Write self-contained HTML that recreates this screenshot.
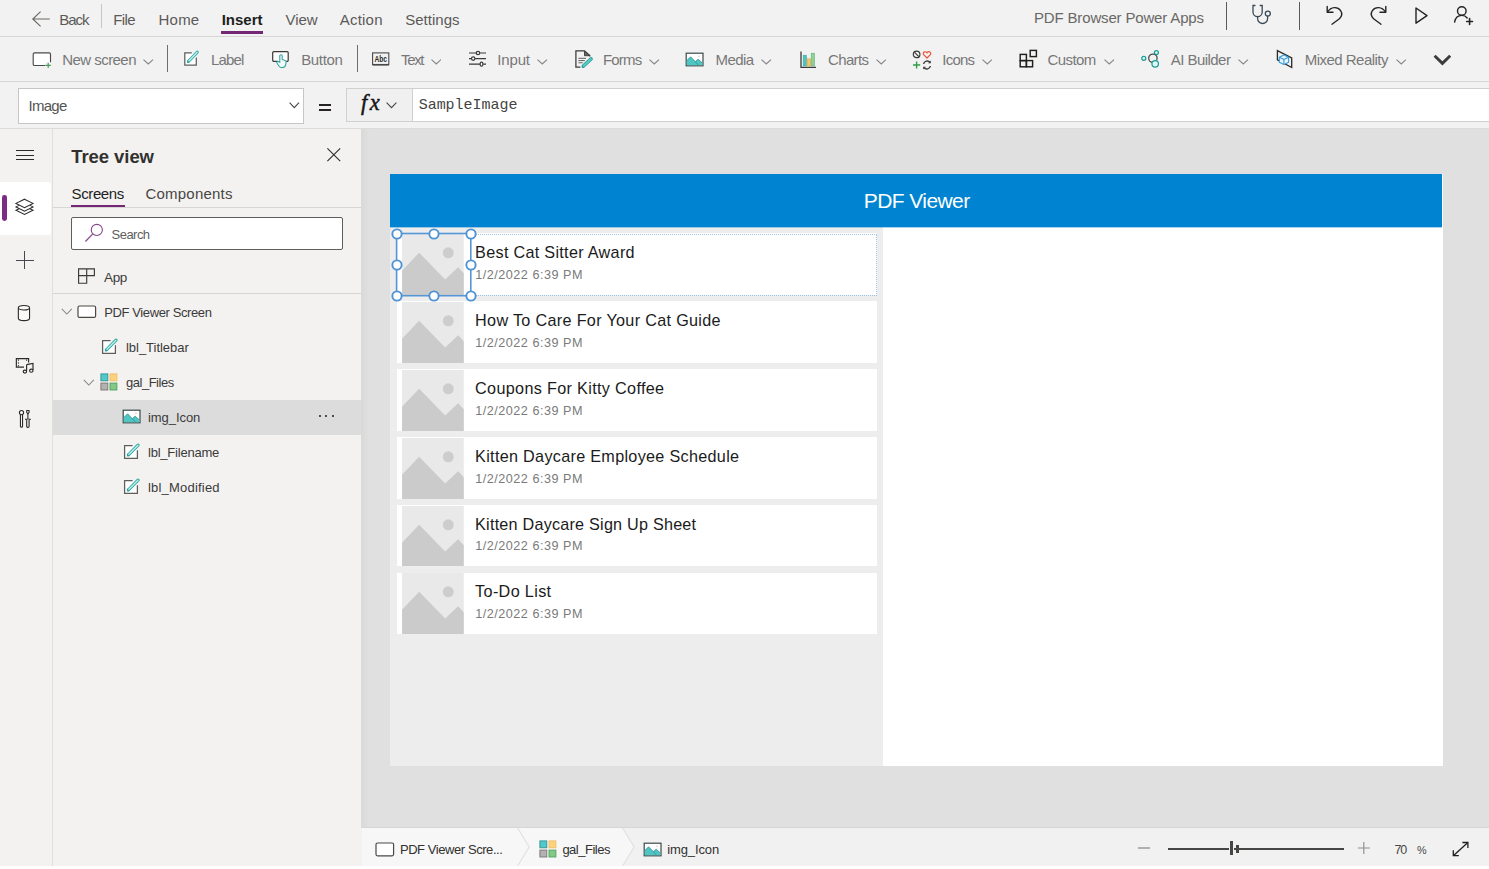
<!DOCTYPE html>
<html lang="en"><head><meta charset="utf-8"><title>PDF Browser Power Apps</title>
<style>
html,body{margin:0;padding:0;background:#fff;}
body{width:1489px;height:869px;overflow:hidden;position:relative;font-family:"Liberation Sans",sans-serif;}
.a{position:absolute;display:block;}
.t{position:absolute;display:block;white-space:pre;line-height:20px;height:20px;}
.s{font-family:"Liberation Sans",sans-serif;}
.m{font-family:"Liberation Mono",monospace;}
.r{font-family:"Liberation Serif",serif;}
</style></head>
<body>
<div class="a" style="left:0px;top:0px;width:1489px;height:866px;background:#f3f2f1;"></div>
<div class="a" style="left:0px;top:0px;width:1489px;height:128px;background:#f2f2f2;"></div>
<div class="a" style="left:0px;top:36px;width:1489px;height:1px;background:#d8d6d4;"></div>
<div class="a" style="left:0px;top:81px;width:1489px;height:1px;background:#d8d6d4;"></div>
<div class="a" style="left:0px;top:128px;width:1489px;height:1px;background:#dddbd9;"></div>
<div class="a" style="left:362px;top:129px;width:1127px;height:699px;background:#e0e0e0;"></div>
<div class="a" style="left:361px;top:129px;width:8px;height:699px;background:linear-gradient(to right,#d9d9d9,#e0e0e0);"></div>
<div class="a" style="left:52px;top:129px;width:1px;height:737px;background:#e1dfdd;"></div>
<div class="a" style="left:362px;top:827px;width:1127px;height:1px;background:#d6d6d6;"></div>
<div class="a" style="left:362px;top:828px;width:1127px;height:38px;background:#f1f1f1;"></div>
<!-- topbar -->
<svg class="a" style="left:30px;top:9px;" width="22" height="20" viewBox="0 0 22 20"><path d="M10.6 2.6 L2.8 10 L10.6 17.4 M2.8 10 H19.8" fill="none" stroke="#6a6866" stroke-width="1.15"/></svg>
<span class="t s " style="left:59.2px;top:9.80px;font-size:15px;color:#5c5a58;letter-spacing:-1.020px;">Back</span>
<div class="a" style="left:101px;top:4px;width:1px;height:24px;background:#c8c6c4;"></div>
<span class="t s " style="left:113.2px;top:9.80px;font-size:15px;color:#5c5a58;letter-spacing:-0.557px;">File</span>
<span class="t s " style="left:158.5px;top:9.80px;font-size:15px;color:#5c5a58;letter-spacing:0.228px;">Home</span>
<span class="t s " style="left:221.7px;top:9.80px;font-size:15px;color:#201f1e;letter-spacing:-0.012px;font-weight:700;">Insert</span>
<div class="a" style="left:221px;top:31px;width:42px;height:3px;background:#742774;"></div>
<span class="t s " style="left:285.5px;top:9.80px;font-size:15px;color:#5c5a58;letter-spacing:-0.083px;">View</span>
<span class="t s " style="left:339.7px;top:9.80px;font-size:15px;color:#5c5a58;letter-spacing:0.219px;">Action</span>
<span class="t s " style="left:405.2px;top:9.80px;font-size:15px;color:#5c5a58;letter-spacing:0.014px;">Settings</span>
<span class="t s " style="left:1034px;top:8.30px;font-size:15px;color:#6a6866;letter-spacing:-0.162px;">PDF Browser Power Apps</span>
<div class="a" style="left:1226px;top:2px;width:1.2px;height:28px;background:#5a5a5a;"></div>
<div class="a" style="left:1299px;top:2px;width:1.2px;height:28px;background:#5a5a5a;"></div>
<svg class="a" style="left:1250px;top:3px;" width="24" height="24" viewBox="0 0 24 24"><g fill="none" stroke="#3b4a57" stroke-width="1.3" stroke-linecap="round"><path d="M5 2.5 H3 V9 a4.6 4.6 0 0 0 9.2 0 V2.5 H10.2"/><path d="M7.6 13.6 V15.5 a5 5 0 0 0 10 0 V13.2"/><circle cx="17.8" cy="10.6" r="2.5"/></g></svg>
<svg class="a" style="left:1324px;top:3px;" width="22" height="24" viewBox="0 0 22 24"><g fill="none" stroke="#252423" stroke-width="1.4" stroke-linecap="round" stroke-linejoin="round"><path d="M3.2 3.4 V9.2 H9"/><path d="M3.6 8.8 C7 3.8 13.5 3.2 16.6 7.6 C18.6 10.6 17.6 13.6 15.4 15.8 L8 21.2"/></g></svg>
<svg class="a" style="left:1367px;top:3px;" width="22" height="24" viewBox="0 0 22 24"><g transform="translate(22 0) scale(-1 1)" fill="none" stroke="#252423" stroke-width="1.4" stroke-linecap="round" stroke-linejoin="round"><path d="M3.2 3.4 V9.2 H9"/><path d="M3.6 8.8 C7 3.8 13.5 3.2 16.6 7.6 C18.6 10.6 17.6 13.6 15.4 15.8 L8 21.2"/></g></svg>
<svg class="a" style="left:1413px;top:5px;" width="18" height="22" viewBox="0 0 18 22"><path d="M3 3 L14 10.6 L3 18.2 Z" fill="none" stroke="#252423" stroke-width="1.4" stroke-linejoin="round"/></svg>
<svg class="a" style="left:1452px;top:4px;" width="24" height="24" viewBox="0 0 24 24"><g fill="none" stroke="#252423" stroke-width="1.4" stroke-linecap="round"><circle cx="9.8" cy="7" r="4.3"/><path d="M2.6 18 C3.4 13.6 6.4 11.4 9.8 11.4 C12 11.4 14 12.4 15.2 14"/><path d="M17.6 14.6 V20.4 M14.7 17.5 H20.5" stroke-width="1.6"/></g></svg>
<!-- ribbon -->
<svg class="a" style="left:32px;top:51px;" width="22" height="18" viewBox="0 0 22 18"><rect x="1.2" y="1.9" width="17.3" height="12.6" rx="1.3" fill="#fff" stroke="#4a4a4a" stroke-width="1.15"/><rect x="13.2" y="11.2" width="7" height="7" fill="#f2f2f2"/><path d="M16.2 11.7 V17 M13.6 14.35 H18.8" stroke="#3f9b4f" stroke-width="1.05" fill="none"/></svg>
<span class="t s " style="left:62.3px;top:50.30px;font-size:15px;color:#787878;letter-spacing:-0.556px;">New screen</span>
<svg class="a" style="left:143.2px;top:58.7px;" width="10.5" height="6.2" viewBox="0 0 10.5 6.2"><path d="M0.5 0.6 L5.25 5.0 L10.0 0.6" fill="none" stroke="#858585" stroke-width="1.1"/></svg>
<div class="a" style="left:167px;top:45px;width:1px;height:27px;background:#6e6e6e;"></div>
<svg class="a" style="left:183px;top:49px;" width="18" height="19" viewBox="0 0 18 19"><path d="M8.8 3.9 H1.8 V16.2 H13.3 V8.6" fill="#fff" stroke="#5f5e5c" stroke-width="1.25"/><path d="M3.9 13.9 L4.8 11 L6.9 13.1 Z" fill="#2a9d96"/><path d="M5.6 12.3 L14.2 3.2" stroke="#2ba39c" stroke-width="3.1" stroke-linecap="round" fill="none"/><path d="M6.1 11.8 L14.1 3.3" stroke="#b8f1ed" stroke-width="1.5" stroke-linecap="round" fill="none"/></svg>
<span class="t s " style="left:211px;top:50.30px;font-size:15px;color:#787878;letter-spacing:-0.826px;">Label</span>
<svg class="a" style="left:271px;top:50px;" width="20" height="20" viewBox="0 0 20 20"><rect x="1.8" y="1.8" width="15.4" height="9.4" rx="1.2" fill="#fdfdfd"/><path d="M6.6 11.4 H2.8 a1.1 1.1 0 0 1 -1.1 -1.1 V2.8 a1.1 1.1 0 0 1 1.1 -1.1 H16.1 a1.1 1.1 0 0 1 1.1 1.1 V10.3 a1.1 1.1 0 0 1 -1.1 1.1 H15.2" fill="none" stroke="#3b3a39" stroke-width="1.2"/><path d="M8.8 12.4 V6 a1.2 1.2 0 0 1 2.4 0 V9.6 L13.6 10.2 a1.9 1.9 0 0 1 1.5 2.1 L14.7 14.6 a3.6 3.6 0 0 1 -3.5 3 H10.9 a3.8 3.8 0 0 1 -3.2 -1.8 L6 13 a1 1 0 0 1 1.6 -1.2 Z" fill="#f2fbfa" stroke="#2fa39c" stroke-width="1.05" stroke-linejoin="round"/></svg>
<span class="t s " style="left:301.2px;top:50.30px;font-size:15px;color:#787878;letter-spacing:-0.355px;">Button</span>
<div class="a" style="left:357px;top:45px;width:1px;height:27px;background:#6e6e6e;"></div>
<svg class="a" style="left:371px;top:52px;" width="19" height="14" viewBox="0 0 19 14"><rect x="1.6" y="0.9" width="16.2" height="11.6" fill="none" stroke="#4a4846" stroke-width="1.1"/><path d="M1.6 12.9 H17.8" stroke="#4a4846" stroke-width="1.4"/><text x="9.7" y="9.9" font-family="Liberation Sans, sans-serif" font-size="8.4" font-weight="700" text-anchor="middle" textLength="12.6" lengthAdjust="spacingAndGlyphs" fill="#2b2a29">Abc</text></svg>
<span class="t s " style="left:401px;top:50.30px;font-size:15px;color:#787878;letter-spacing:-1.339px;">Text</span>
<svg class="a" style="left:430.8px;top:58.7px;" width="10.5" height="6.2" viewBox="0 0 10.5 6.2"><path d="M0.5 0.6 L5.25 5.0 L10.0 0.6" fill="none" stroke="#858585" stroke-width="1.1"/></svg>
<svg class="a" style="left:468px;top:49px;" width="19" height="19" viewBox="0 0 19 19"><g fill="none" stroke="#3b3a39" stroke-width="1.2"><path d="M1 4 H8.4 M11.6 4 H18"/><circle cx="10" cy="4" r="1.7" fill="#fff"/><path d="M1 9.6 H3.6 M6.8 9.6 H18"/><circle cx="5.2" cy="9.6" r="1.7" fill="#fff"/><path d="M1 15.2 H12 M15.2 15.2 H18"/><rect x="12.2" y="13.2" width="2.6" height="4" rx="1.2" fill="#fff"/></g></svg>
<span class="t s " style="left:497.3px;top:50.30px;font-size:15px;color:#787878;letter-spacing:-0.169px;">Input</span>
<svg class="a" style="left:537.2px;top:58.7px;" width="10.5" height="6.2" viewBox="0 0 10.5 6.2"><path d="M0.5 0.6 L5.25 5.0 L10.0 0.6" fill="none" stroke="#858585" stroke-width="1.1"/></svg>
<svg class="a" style="left:573px;top:49px;" width="22" height="21" viewBox="0 0 22 21"><path d="M7.4 18.1 H2.9 V1.9 H11.5 L16.8 6.6 V7.4" fill="none" stroke="#3b3a39" stroke-width="1.25" stroke-linejoin="miter"/><path d="M11.5 2.3 V6.7 H16.5 Z" fill="#6a6866" stroke="#3b3a39" stroke-width="0.9" stroke-linejoin="round"/><path d="M5.4 9.3 H13 M5.4 11.6 H11.8" stroke="#555" stroke-width="0.95" fill="none"/><path d="M5.4 13.7 H9.8" stroke="#8a8886" stroke-width="1.3" fill="none"/><path d="M8.6 19 L9.6 15.9 L11.7 18 Z" fill="#1f9a94"/><path d="M10.4 17 L18 10" stroke="#1f9a94" stroke-width="3.7" stroke-linecap="round" fill="none"/><path d="M10.7 16.7 L17.8 10.2" stroke="#5acdc8" stroke-width="2.2" stroke-linecap="round" fill="none"/></svg>
<span class="t s " style="left:603px;top:50.30px;font-size:15px;color:#787878;letter-spacing:-0.825px;">Forms</span>
<svg class="a" style="left:649px;top:58.7px;" width="10.5" height="6.2" viewBox="0 0 10.5 6.2"><path d="M0.5 0.6 L5.25 5.0 L10.0 0.6" fill="none" stroke="#858585" stroke-width="1.1"/></svg>
<svg class="a" style="left:685.4px;top:51.8px;" width="19" height="15" viewBox="0 0 19 15"><rect x="1.2" y="1.2" width="16.8" height="12.6" fill="#fff" stroke="#3b4a4a" stroke-width="1.2"/><path d="M1.8 13.2 V8.6 L5.6 4.8 L10.2 9.6 L13.2 7.2 L17.4 11 V13.2 Z" fill="#4fc6c3"/><path d="M1.8 8.6 L5.6 4.8 L13.6 13.2 M10.6 9.4 L13.2 7.2 L17.4 11" fill="none" stroke="#2d8f8c" stroke-width="0.8"/><circle cx="14" cy="4.4" r="0.8" fill="#f4c7c0"/></svg>
<span class="t s " style="left:715.5px;top:50.30px;font-size:15px;color:#787878;letter-spacing:-0.540px;">Media</span>
<svg class="a" style="left:761px;top:58.7px;" width="10.5" height="6.2" viewBox="0 0 10.5 6.2"><path d="M0.5 0.6 L5.25 5.0 L10.0 0.6" fill="none" stroke="#858585" stroke-width="1.1"/></svg>
<svg class="a" style="left:798.6px;top:49.8px;" width="19" height="20" viewBox="0 0 19 20"><path d="M2 1.6 V17.4 H17" fill="none" stroke="#3b3a39" stroke-width="1.3"/><rect x="4.2" y="5.2" width="3.2" height="10.8" fill="#4fc3be" stroke="#3aa9a4" stroke-width="0.6"/><rect x="8.2" y="8.8" width="3.2" height="7.2" fill="#f6c56a" stroke="#e0a53c" stroke-width="0.6"/><rect x="12.2" y="3.2" width="3.2" height="12.8" fill="#8fd19a" stroke="#5db36c" stroke-width="0.6"/></svg>
<span class="t s " style="left:828px;top:50.30px;font-size:15px;color:#787878;letter-spacing:-0.637px;">Charts</span>
<svg class="a" style="left:875.8px;top:58.7px;" width="10.5" height="6.2" viewBox="0 0 10.5 6.2"><path d="M0.5 0.6 L5.25 5.0 L10.0 0.6" fill="none" stroke="#858585" stroke-width="1.1"/></svg>
<svg class="a" style="left:911px;top:48.8px;" width="22" height="22" viewBox="0 0 22 22"><circle cx="5.6" cy="5.4" r="3.3" fill="none" stroke="#3b3a39" stroke-width="1.2"/><path d="M3.4 3.2 L7.8 7.6" stroke="#3b3a39" stroke-width="1.2"/><path d="M16 9 L12.4 5.4 a1.9 1.9 0 0 1 3.6 -1.4 a1.9 1.9 0 0 1 3.6 1.4 Z" fill="none" stroke="#e8553d" stroke-width="1.2" stroke-linejoin="round"/><path d="M5.6 12.4 V19.6 M2 16 H9.2" stroke="#2e9e49" stroke-width="1.4"/><path d="M12.6 15 a3.6 3.6 0 0 1 6.4 -1.6 M19.4 17 a3.6 3.6 0 0 1 -6.4 1.6" fill="none" stroke="#3b3a39" stroke-width="1.4"/><path d="M19.8 11.4 V14.2 H17 Z M12.2 20.6 V17.8 H15 Z" fill="#3b3a39"/></svg>
<span class="t s " style="left:942.3px;top:50.30px;font-size:15px;color:#787878;letter-spacing:-0.790px;">Icons</span>
<svg class="a" style="left:981.7px;top:58.7px;" width="10.5" height="6.2" viewBox="0 0 10.5 6.2"><path d="M0.5 0.6 L5.25 5.0 L10.0 0.6" fill="none" stroke="#858585" stroke-width="1.1"/></svg>
<svg class="a" style="left:1019.3px;top:48.9px;" width="19" height="19" viewBox="0 0 19 19"><g fill="none" stroke="#201f1e" stroke-width="1.45"><rect x="1.2" y="5.4" width="6.2" height="6.2"/><rect x="1.2" y="11.6" width="6.2" height="6.2"/><rect x="7.4" y="11.6" width="6.2" height="6.2"/><rect x="11.2" y="1.4" width="6.2" height="6.2"/></g></svg>
<span class="t s " style="left:1047.6px;top:50.30px;font-size:15px;color:#787878;letter-spacing:-0.617px;">Custom</span>
<svg class="a" style="left:1104px;top:58.7px;" width="10.5" height="6.2" viewBox="0 0 10.5 6.2"><path d="M0.5 0.6 L5.25 5.0 L10.0 0.6" fill="none" stroke="#858585" stroke-width="1.1"/></svg>
<svg class="a" style="left:1140px;top:48px;" width="22" height="22" viewBox="0 0 22 22"><circle cx="12.9" cy="10.3" r="4.2" fill="none" stroke="#4a4a4a" stroke-width="1.3"/><g fill="#dff7f5" stroke="#1f9c96" stroke-width="1.25"><circle cx="3.8" cy="10.3" r="2"/><circle cx="16.4" cy="4.5" r="2"/><circle cx="15.2" cy="15.8" r="3.25"/></g></svg>
<span class="t s " style="left:1170.8px;top:50.30px;font-size:15px;color:#787878;letter-spacing:-0.550px;">AI Builder</span>
<svg class="a" style="left:1238.4px;top:58.7px;" width="10.5" height="6.2" viewBox="0 0 10.5 6.2"><path d="M0.5 0.6 L5.25 5.0 L10.0 0.6" fill="none" stroke="#858585" stroke-width="1.1"/></svg>
<svg class="a" style="left:1275px;top:48px;" width="20" height="22" viewBox="0 0 20 22"><path d="M2.4 2.6 L16.7 9.8 V19.5 L2.4 11.9 Z" fill="none" stroke="#2b2a29" stroke-width="1.3" stroke-linejoin="miter"/><g fill="#e4f3fc" stroke="#3a9bd6" stroke-width="1.1" stroke-linejoin="round"><path d="M8.9 7 L13.6 9.2 V14.2 L8.9 16.4 L4.3 14.2 V9.2 Z"/><path d="M4.3 9.2 L8.9 11.4 L13.6 9.2 M8.9 11.4 V16.4" fill="none"/></g></svg>
<span class="t s " style="left:1304.8px;top:50.30px;font-size:15px;color:#787878;letter-spacing:-0.528px;">Mixed Reality</span>
<svg class="a" style="left:1395.8px;top:58.7px;" width="10.5" height="6.2" viewBox="0 0 10.5 6.2"><path d="M0.5 0.6 L5.25 5.0 L10.0 0.6" fill="none" stroke="#858585" stroke-width="1.1"/></svg>
<svg class="a" style="left:1432px;top:53px;" width="21" height="14" viewBox="0 0 21 14"><path d="M2.6 2.8 L10.4 10.4 L18.2 2.8" fill="none" stroke="#3d3c3b" stroke-width="2.9"/></svg>
<!-- formula -->
<div class="a" style="left:18px;top:88px;width:286px;height:35.5px;background:#fff;box-sizing:border-box;border:1px solid #c8c6c4;"></div>
<span class="t s " style="left:28.4px;top:96.00px;font-size:15px;color:#555;letter-spacing:-0.676px;">Image</span>
<svg class="a" style="left:289px;top:102px;" width="11" height="7" viewBox="0 0 11 7"><path d="M0.6 0.6 L5.3 5.6 L10 0.6" fill="none" stroke="#484644" stroke-width="1.1"/></svg>
<div class="a" style="left:319px;top:103.5px;width:12.3px;height:2px;background:#252423;"></div>
<div class="a" style="left:319px;top:108.7px;width:12.3px;height:2px;background:#252423;"></div>
<div class="a" style="left:346px;top:87.5px;width:66.5px;height:34px;background:#f0f0f0;box-sizing:border-box;border:1px solid #d2d0ce;"></div>
<span class="t r " style="left:361.0px;top:93.21px;font-size:22.5px;color:#151515;letter-spacing:2.550px;font-style:italic;-webkit-text-stroke:0.45px #151515;">fx</span>
<svg class="a" style="left:386px;top:101.5px;" width="11.5" height="7" viewBox="0 0 11.5 7"><path d="M0.6 0.6 L5.5 5.6 L10.4 0.6" fill="none" stroke="#484644" stroke-width="1.1"/></svg>
<div class="a" style="left:412px;top:87.5px;width:1080px;height:34px;background:#fff;box-sizing:border-box;border:1px solid #d2d0ce;"></div>
<span class="t m " style="left:418.7px;top:96.00px;font-size:15px;color:#444;letter-spacing:-0.023px;">SampleImage</span>
<!-- rail -->
<div class="a" style="left:16px;top:150.1px;width:18px;height:1.1px;background:#2b2a29;"></div>
<div class="a" style="left:16px;top:154.7px;width:18px;height:1.1px;background:#2b2a29;"></div>
<div class="a" style="left:16px;top:159.3px;width:18px;height:1.1px;background:#2b2a29;"></div>
<div class="a" style="left:0px;top:182px;width:50.6px;height:53px;background:#ffffff;border-radius:0 3px 3px 0;"></div>
<div class="a" style="left:2.1px;top:195.2px;width:4.8px;height:25.7px;background:#7b2a85;border-radius:2.4px;"></div>
<svg class="a" style="left:14px;top:197px;" width="22" height="20" viewBox="0 0 22 20"><g fill="none" stroke="#2b2a29" stroke-width="1.05" stroke-linejoin="miter"><path d="M10.5 2.2 L19 6.4 L10.5 10.6 L2 6.4 Z"/><path d="M5 8.4 L2 9.9 L10.5 14.1 L19 9.9 L16 8.4"/><path d="M5 11.8 L2 13.3 L10.5 17.5 L19 13.3 L16 11.8"/></g></svg>
<div class="a" style="left:15.8px;top:259.5px;width:18px;height:1.05px;background:#4a4650;"></div>
<div class="a" style="left:24.3px;top:251px;width:1.05px;height:18px;background:#4a4650;"></div>
<svg class="a" style="left:14px;top:302px;" width="20" height="22" viewBox="0 0 20 22"><g stroke="#2b2a29" stroke-width="1.1"><path d="M4.35 5.7 V16.3 a5.6 2.3 0 0 0 11.2 0 V5.7" fill="#faf9f8"/><ellipse cx="9.95" cy="5.7" rx="5.6" ry="2.25" fill="#faf9f8"/></g></svg>
<svg class="a" style="left:13px;top:355px;" width="24" height="22" viewBox="0 0 24 22"><g fill="none" stroke="#2b2a29" stroke-width="1.15"><path d="M11 12.1 H3.35 V3.55 H15.6 V7.6"/><path d="M5.4 4.4 V11.4 M13.6 4.4 V7" stroke-dasharray="1.5 1.3" stroke-width="0.9"/><path d="M13.6 15.8 V10.4 Q13.6 9.6 14.6 9.4 L20 8.4 V15"/><ellipse cx="11.9" cy="16.6" rx="1.7" ry="1.55"/><ellipse cx="18.3" cy="15.7" rx="1.7" ry="1.55"/></g></svg>
<svg class="a" style="left:14px;top:406px;" width="22" height="24" viewBox="0 0 22 24"><g fill="#f6f4f6" stroke="#2b2a29" stroke-width="1.1" stroke-linejoin="round"><path d="M6.45 8.6 V20.2 a1.05 1.05 0 0 0 2.1 0 V8.6"/><circle cx="7.5" cy="6.6" r="2.1"/><path d="M12.7 4.5 H15.1 V6.2 L14.3 7.6 H13.5 L12.7 6.2 Z"/><path d="M13.9 7.7 V13"/><path d="M11 13.3 H16.8" /><path d="M12.7 13.4 V20.2 a1.2 1.2 0 0 0 2.4 0 V13.4"/></g></svg>
<!-- tree -->
<span class="t s " style="left:71.3px;top:147.09px;font-size:18.5px;color:#323130;letter-spacing:-0.077px;font-weight:700;">Tree view</span>
<svg class="a" style="left:326px;top:147px;" width="16" height="16" viewBox="0 0 16 16"><path d="M1.4 1.4 L14.2 14.2 M14.2 1.4 L1.4 14.2" stroke="#323130" stroke-width="1.15" fill="none"/></svg>
<span class="t s " style="left:71.5px;top:184.20px;font-size:15px;color:#201f1e;letter-spacing:-0.372px;">Screens</span>
<span class="t s " style="left:145.5px;top:184.20px;font-size:15px;color:#484644;letter-spacing:0.215px;">Components</span>
<div class="a" style="left:71px;top:204.5px;width:54px;height:2.2px;background:#742774;"></div>
<div class="a" style="left:53px;top:207px;width:308px;height:1px;background:#d8d6d4;"></div>
<div class="a" style="left:71px;top:217px;width:272px;height:32.5px;background:#fff;box-sizing:border-box;border:1px solid #605e5c;border-radius:2px;"></div>
<svg class="a" style="left:84px;top:222px;" width="22" height="22" viewBox="0 0 22 22"><circle cx="12.8" cy="7.9" r="5.55" fill="none" stroke="#84488a" stroke-width="1.1"/><path d="M8.8 11.9 L1.4 19.5" stroke="#84488a" stroke-width="1.2" fill="none"/></svg>
<span class="t s " style="left:111.6px;top:225.00px;font-size:13px;color:#605e5c;letter-spacing:-0.541px;">Search</span>
<svg class="a" style="left:77px;top:267px;" width="20" height="18" viewBox="0 0 20 18"><g fill="none" stroke="#3b3a39" stroke-width="1.15"><path d="M1.6 1.9 H17.4 V8.6 H9.7 V16.2 H1.6 Z"/><path d="M9.7 1.9 V8.6 M1.6 8.6 H9.7"/></g></svg>
<span class="t s " style="left:104px;top:268.22px;font-size:13.5px;color:#3b3a39;letter-spacing:-0.366px;">App</span>
<div class="a" style="left:53px;top:293px;width:308px;height:1px;background:#d8d6d4;"></div>
<svg class="a" style="left:61px;top:308.2px;" width="12" height="8" viewBox="0 0 12 8"><path d="M0.8 0.8 L5.8 6 L10.8 0.8" fill="none" stroke="#8a8886" stroke-width="1.05"/></svg>
<svg class="a" style="left:77px;top:305px;" width="20" height="14.0" viewBox="0 0 20 14.0"><rect x="1" y="1" width="17.6" height="11.4" rx="1.5" fill="#fff" stroke="#4a4846" stroke-width="1.2"/></svg>
<span class="t s " style="left:104.3px;top:303.00px;font-size:13px;color:#3b3a39;letter-spacing:-0.395px;">PDF Viewer Screen</span>
<svg class="a" style="left:101px;top:338.0px;" width="17.00" height="17.00" viewBox="0 0 17 17"><path d="M9.6 2.5 H1.6 V15.3 H14.4 V7.2" fill="#fff" stroke="#5f5e5c" stroke-width="1.25"/><path d="M3.7 13.5 L4.6 10.5 L6.8 12.6 Z" fill="#2a9d96"/><path d="M5.4 11.8 L15 2.2" stroke="#2ba39c" stroke-width="3.1" stroke-linecap="round" fill="none"/><path d="M5.9 11.3 L14.9 2.3" stroke="#b8f1ed" stroke-width="1.5" stroke-linecap="round" fill="none"/></svg>
<span class="t s " style="left:126px;top:338.00px;font-size:13px;color:#3b3a39;letter-spacing:-0.028px;">lbl_Titlebar</span>
<svg class="a" style="left:82.5px;top:379.4px;" width="12" height="8" viewBox="0 0 12 8"><path d="M0.8 0.8 L5.8 6 L10.8 0.8" fill="none" stroke="#8a8886" stroke-width="1.05"/></svg>
<svg class="a" style="left:99.55px;top:372.55px;" width="18" height="18" viewBox="0 0 18 18"><rect x="0.9" y="0.9" width="6.9" height="6.9" fill="#52c8c8" stroke="#2d9494" stroke-width="0.9"/><rect x="10.0" y="0.9" width="6.9" height="6.9" fill="#fbd280" stroke="#f2bd62" stroke-width="0.9"/><rect x="0.9" y="10.1" width="6.9" height="6.9" fill="#b4b2b0" stroke="#767472" stroke-width="0.9"/><rect x="10.0" y="10.1" width="6.9" height="6.9" fill="#82c985" stroke="#4f9f62" stroke-width="0.9"/></svg>
<span class="t s " style="left:126px;top:373.00px;font-size:13px;color:#3b3a39;letter-spacing:-0.479px;">gal_Files</span>
<div class="a" style="left:53px;top:400px;width:308px;height:35px;background:#dcdcdc;"></div>
<svg class="a" style="left:121.5px;top:409.4px;" width="19" height="15" viewBox="0 0 19 15"><rect x="1.2" y="1.2" width="16.8" height="12.6" fill="#fff" stroke="#3b4a4a" stroke-width="1.2"/><path d="M1.8 13.2 V8.6 L5.6 4.8 L10.2 9.6 L13.2 7.2 L17.4 11 V13.2 Z" fill="#4fc6c3"/><path d="M1.8 8.6 L5.6 4.8 L13.6 13.2 M10.6 9.4 L13.2 7.2 L17.4 11" fill="none" stroke="#2d8f8c" stroke-width="0.8"/><circle cx="14" cy="4.4" r="0.8" fill="#f4c7c0"/></svg>
<span class="t s " style="left:148px;top:408.00px;font-size:13px;color:#3b3a39;letter-spacing:-0.064px;">img_Icon</span>
<div class="a" style="left:318.5px;top:415.2px;width:2.1px;height:2.1px;background:#201f1e;border-radius:50%;"></div>
<div class="a" style="left:325.0px;top:415.2px;width:2.1px;height:2.1px;background:#201f1e;border-radius:50%;"></div>
<div class="a" style="left:331.5px;top:415.2px;width:2.1px;height:2.1px;background:#201f1e;border-radius:50%;"></div>
<svg class="a" style="left:123px;top:443px;" width="17.00" height="17.00" viewBox="0 0 17 17"><path d="M9.6 2.5 H1.6 V15.3 H14.4 V7.2" fill="#fff" stroke="#5f5e5c" stroke-width="1.25"/><path d="M3.7 13.5 L4.6 10.5 L6.8 12.6 Z" fill="#2a9d96"/><path d="M5.4 11.8 L15 2.2" stroke="#2ba39c" stroke-width="3.1" stroke-linecap="round" fill="none"/><path d="M5.9 11.3 L14.9 2.3" stroke="#b8f1ed" stroke-width="1.5" stroke-linecap="round" fill="none"/></svg>
<span class="t s " style="left:148px;top:443.10px;font-size:13px;color:#3b3a39;letter-spacing:-0.218px;">lbl_Filename</span>
<svg class="a" style="left:123px;top:478px;" width="17.00" height="17.00" viewBox="0 0 17 17"><path d="M9.6 2.5 H1.6 V15.3 H14.4 V7.2" fill="#fff" stroke="#5f5e5c" stroke-width="1.25"/><path d="M3.7 13.5 L4.6 10.5 L6.8 12.6 Z" fill="#2a9d96"/><path d="M5.4 11.8 L15 2.2" stroke="#2ba39c" stroke-width="3.1" stroke-linecap="round" fill="none"/><path d="M5.9 11.3 L14.9 2.3" stroke="#b8f1ed" stroke-width="1.5" stroke-linecap="round" fill="none"/></svg>
<span class="t s " style="left:148px;top:478.10px;font-size:13px;color:#3b3a39;letter-spacing:0.202px;">lbl_Modified</span>
<!-- canvas -->
<div class="a" style="left:390px;top:174px;width:1053px;height:591.6px;background:#ffffff;"></div>
<div class="a" style="left:390px;top:174px;width:1052px;height:53px;background:#0084d1;"></div>
<span class="t s " style="left:863.8px;top:191.32px;font-size:21px;color:#ffffff;letter-spacing:-0.584px;">PDF Viewer</span>
<div class="a" style="left:390px;top:227px;width:493px;height:538.6px;background:#ededed;"></div>
<div class="a" style="left:390px;top:227px;width:1052px;height:1px;background:rgba(0,132,209,0.35);"></div>
<div class="a" style="left:396.8px;top:233.30px;width:480.2px;height:61.7px;background:#ffffff;"></div>
<svg class="a" style="left:402.1px;top:234.10px;" width="61.8" height="60.90" viewBox="0 0 61.8 61"><rect width="61.8" height="61" fill="#e9e9e9"/><path d="M0 36.8 L17.1 18.7 L43.2 45.6 L56.2 33.2 L61.8 39.3 V61 H0 Z" fill="#cbcbcb"/><circle cx="46.3" cy="18.8" r="5.5" fill="#cdcdcd"/></svg>
<span class="t s " style="left:475.1px;top:242.09px;font-size:16.2px;color:#1b1b1b;letter-spacing:0.297px;">Best Cat Sitter Award</span>
<span class="t s " style="left:475.2px;top:264.93px;font-size:12.6px;color:#7a7a7a;letter-spacing:0.519px;">1/2/2022 6:39 PM</span>
<div class="a" style="left:396.8px;top:301.17px;width:480.2px;height:61.7px;background:#ffffff;"></div>
<svg class="a" style="left:402.1px;top:301.97px;" width="61.8" height="60.90" viewBox="0 0 61.8 61"><rect width="61.8" height="61" fill="#e9e9e9"/><path d="M0 36.8 L17.1 18.7 L43.2 45.6 L56.2 33.2 L61.8 39.3 V61 H0 Z" fill="#cbcbcb"/><circle cx="46.3" cy="18.8" r="5.5" fill="#cdcdcd"/></svg>
<span class="t s " style="left:475.1px;top:309.96px;font-size:16.2px;color:#1b1b1b;letter-spacing:0.316px;">How To Care For Your Cat Guide</span>
<span class="t s " style="left:475.2px;top:332.80px;font-size:12.6px;color:#7a7a7a;letter-spacing:0.519px;">1/2/2022 6:39 PM</span>
<div class="a" style="left:396.8px;top:369.04px;width:480.2px;height:61.7px;background:#ffffff;"></div>
<svg class="a" style="left:402.1px;top:369.84px;" width="61.8" height="60.90" viewBox="0 0 61.8 61"><rect width="61.8" height="61" fill="#e9e9e9"/><path d="M0 36.8 L17.1 18.7 L43.2 45.6 L56.2 33.2 L61.8 39.3 V61 H0 Z" fill="#cbcbcb"/><circle cx="46.3" cy="18.8" r="5.5" fill="#cdcdcd"/></svg>
<span class="t s " style="left:475.1px;top:377.83px;font-size:16.2px;color:#1b1b1b;letter-spacing:0.328px;">Coupons For Kitty Coffee</span>
<span class="t s " style="left:475.2px;top:400.67px;font-size:12.6px;color:#7a7a7a;letter-spacing:0.519px;">1/2/2022 6:39 PM</span>
<div class="a" style="left:396.8px;top:436.91px;width:480.2px;height:61.7px;background:#ffffff;"></div>
<svg class="a" style="left:402.1px;top:437.71px;" width="61.8" height="60.90" viewBox="0 0 61.8 61"><rect width="61.8" height="61" fill="#e9e9e9"/><path d="M0 36.8 L17.1 18.7 L43.2 45.6 L56.2 33.2 L61.8 39.3 V61 H0 Z" fill="#cbcbcb"/><circle cx="46.3" cy="18.8" r="5.5" fill="#cdcdcd"/></svg>
<span class="t s " style="left:475.1px;top:445.70px;font-size:16.2px;color:#1b1b1b;letter-spacing:0.301px;">Kitten Daycare Employee Schedule</span>
<span class="t s " style="left:475.2px;top:468.54px;font-size:12.6px;color:#7a7a7a;letter-spacing:0.519px;">1/2/2022 6:39 PM</span>
<div class="a" style="left:396.8px;top:504.78px;width:480.2px;height:61.7px;background:#ffffff;"></div>
<svg class="a" style="left:402.1px;top:505.58px;" width="61.8" height="60.90" viewBox="0 0 61.8 61"><rect width="61.8" height="61" fill="#e9e9e9"/><path d="M0 36.8 L17.1 18.7 L43.2 45.6 L56.2 33.2 L61.8 39.3 V61 H0 Z" fill="#cbcbcb"/><circle cx="46.3" cy="18.8" r="5.5" fill="#cdcdcd"/></svg>
<span class="t s " style="left:475.1px;top:513.57px;font-size:16.2px;color:#1b1b1b;letter-spacing:0.220px;">Kitten Daycare Sign Up Sheet</span>
<span class="t s " style="left:475.2px;top:536.41px;font-size:12.6px;color:#7a7a7a;letter-spacing:0.519px;">1/2/2022 6:39 PM</span>
<div class="a" style="left:396.8px;top:572.65px;width:480.2px;height:61.7px;background:#ffffff;"></div>
<svg class="a" style="left:402.1px;top:573.45px;" width="61.8" height="60.90" viewBox="0 0 61.8 61"><rect width="61.8" height="61" fill="#e9e9e9"/><path d="M0 36.8 L17.1 18.7 L43.2 45.6 L56.2 33.2 L61.8 39.3 V61 H0 Z" fill="#cbcbcb"/><circle cx="46.3" cy="18.8" r="5.5" fill="#cdcdcd"/></svg>
<span class="t s " style="left:475.1px;top:581.44px;font-size:16.2px;color:#1b1b1b;letter-spacing:0.347px;">To-Do List</span>
<span class="t s " style="left:475.2px;top:604.28px;font-size:12.6px;color:#7a7a7a;letter-spacing:0.519px;">1/2/2022 6:39 PM</span>
<div class="a" style="left:471px;top:233.6px;width:406px;height:62.4px;box-sizing:border-box;border:1px dotted #9cc2e6;border-left:none;"></div>
<svg class="a" style="left:390px;top:228px;" width="90" height="74" viewBox="0 0 90 74"><rect x="6.6" y="5.5" width="74.2" height="62.2" fill="none" stroke="#5596d6" stroke-width="1.6"/></svg>
<svg class="a" style="left:389.70px;top:226.70px" width="14" height="14" viewBox="0 0 14 14"><circle cx="7" cy="7" r="4.65" fill="#fff" stroke="#4f93d4" stroke-width="1.9"/></svg>
<svg class="a" style="left:389.70px;top:257.70px" width="14" height="14" viewBox="0 0 14 14"><circle cx="7" cy="7" r="4.65" fill="#fff" stroke="#4f93d4" stroke-width="1.9"/></svg>
<svg class="a" style="left:389.70px;top:288.70px" width="14" height="14" viewBox="0 0 14 14"><circle cx="7" cy="7" r="4.65" fill="#fff" stroke="#4f93d4" stroke-width="1.9"/></svg>
<svg class="a" style="left:426.70px;top:226.70px" width="14" height="14" viewBox="0 0 14 14"><circle cx="7" cy="7" r="4.65" fill="#fff" stroke="#4f93d4" stroke-width="1.9"/></svg>
<svg class="a" style="left:426.70px;top:288.70px" width="14" height="14" viewBox="0 0 14 14"><circle cx="7" cy="7" r="4.65" fill="#fff" stroke="#4f93d4" stroke-width="1.9"/></svg>
<svg class="a" style="left:463.70px;top:226.70px" width="14" height="14" viewBox="0 0 14 14"><circle cx="7" cy="7" r="4.65" fill="#fff" stroke="#4f93d4" stroke-width="1.9"/></svg>
<svg class="a" style="left:463.70px;top:257.70px" width="14" height="14" viewBox="0 0 14 14"><circle cx="7" cy="7" r="4.65" fill="#fff" stroke="#4f93d4" stroke-width="1.9"/></svg>
<svg class="a" style="left:463.70px;top:288.70px" width="14" height="14" viewBox="0 0 14 14"><circle cx="7" cy="7" r="4.65" fill="#fff" stroke="#4f93d4" stroke-width="1.9"/></svg>
<!-- bottom -->
<svg class="a" style="left:362px;top:828px;" width="280" height="38" viewBox="0 0 280 38"><path d="M0 0 H260.4 L271.8 19 L260.4 38 H0 Z" fill="#f7f7f7"/></svg>
<svg class="a" style="left:375.4px;top:841.6px;" width="20" height="15.4" viewBox="0 0 20 15.4"><rect x="1" y="1" width="17.6" height="12.8" rx="1.5" fill="#fff" stroke="#4a4846" stroke-width="1.2"/></svg>
<span class="t s " style="left:399.9px;top:839.50px;font-size:13px;color:#323130;letter-spacing:-0.429px;">PDF Viewer Scre...</span>
<svg class="a" style="left:517px;top:828px;" width="14" height="38" viewBox="0 0 14 38"><path d="M0.6 0 L12.2 19 L0.6 38" fill="none" stroke="#e0e0e0" stroke-width="1.1"/></svg>
<svg class="a" style="left:538.6px;top:839.6px;" width="18" height="18" viewBox="0 0 18 18"><rect x="0.9" y="0.9" width="6.9" height="6.9" fill="#52c8c8" stroke="#2d9494" stroke-width="0.9"/><rect x="10.0" y="0.9" width="6.9" height="6.9" fill="#fbd280" stroke="#f2bd62" stroke-width="0.9"/><rect x="0.9" y="10.1" width="6.9" height="6.9" fill="#b4b2b0" stroke="#767472" stroke-width="0.9"/><rect x="10.0" y="10.1" width="6.9" height="6.9" fill="#82c985" stroke="#4f9f62" stroke-width="0.9"/></svg>
<span class="t s " style="left:562.4px;top:839.50px;font-size:13px;color:#323130;letter-spacing:-0.504px;">gal_Files</span>
<svg class="a" style="left:622px;top:828px;" width="14" height="38" viewBox="0 0 14 38"><path d="M0.6 0 L12.2 19 L0.6 38" fill="none" stroke="#e0e0e0" stroke-width="1.1"/></svg>
<svg class="a" style="left:643px;top:841.6px;" width="19" height="15" viewBox="0 0 19 15"><rect x="1.2" y="1.2" width="16.8" height="12.6" fill="#fff" stroke="#3b4a4a" stroke-width="1.2"/><path d="M1.8 13.2 V8.6 L5.6 4.8 L10.2 9.6 L13.2 7.2 L17.4 11 V13.2 Z" fill="#4fc6c3"/><path d="M1.8 8.6 L5.6 4.8 L13.6 13.2 M10.6 9.4 L13.2 7.2 L17.4 11" fill="none" stroke="#2d8f8c" stroke-width="0.8"/><circle cx="14" cy="4.4" r="0.8" fill="#f4c7c0"/></svg>
<span class="t s " style="left:667.2px;top:839.50px;font-size:13px;color:#323130;letter-spacing:-0.107px;">img_Icon</span>
<div class="a" style="left:1137.8px;top:847.4px;width:12.4px;height:1.3px;background:#b3b0ad;"></div>
<div class="a" style="left:1167.8px;top:848px;width:176px;height:2px;background:#484644;"></div>
<div class="a" style="left:1229.4px;top:840.8px;width:4.6px;height:14.2px;background:#f1f1f1;"></div>
<div class="a" style="left:1230.0px;top:841px;width:2.6px;height:13.8px;background:#484644;"></div>
<div class="a" style="left:1235.6px;top:844.8px;width:3px;height:8.6px;background:#484644;"></div>
<svg class="a" style="left:1356px;top:840px;" width="16" height="16" viewBox="0 0 16 16"><path d="M1.8 8 H13.8 M7.8 2 V14" stroke="#8f8f8f" stroke-width="1.15" fill="none"/></svg>
<span class="t s " style="left:1394.6px;top:839.67px;font-size:12.5px;color:#484644;letter-spacing:-1.306px;">70</span>
<span class="t s " style="left:1417px;top:840.26px;font-size:10.8px;color:#484644;">%</span>
<svg class="a" style="left:1450px;top:840px;" width="21" height="19" viewBox="0 0 21 19"><g fill="none" stroke="#201f1e" stroke-width="1.3"><path d="M3.6 15.4 L17.6 2.8"/><path d="M12.4 2.5 H17.9 V8"/><path d="M3.3 10.2 V15.7 H8.8"/></g></svg>
</body></html>
